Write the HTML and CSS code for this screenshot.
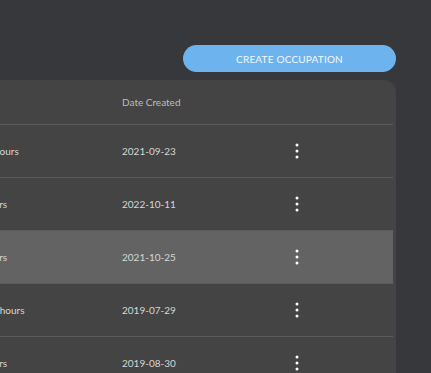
FILE: index.html
```html
<!DOCTYPE html>
<html lang="en">
<head>
    <meta charset="UTF-8">
    <meta name="viewport" content="width=device-width, initial-scale=1.0">
    <title>Occupations</title>
    <link rel="stylesheet" href="styles.css">
</head>
<body>

    <div class="page">
        <button class="btn">CREATE OCCUPATION</button>

        <!-- Table of occupations -->
        <div class="card">
            <div class="table">
                <div class="row head">
                    <div class="cell name">Title</div>
                    <div class="cell date">Date Created</div>
                    <div class="cell"></div>
                </div>
                <div class="row">
                    <div class="cell name">120 hours</div>
                    <div class="cell date">2021-09-23</div>
                    <div class="cell menu"><svg width="4" height="16" viewBox="0 0 4 16"><circle cx="2" cy="2" r="1.5"/><circle cx="2" cy="8" r="1.5"/><circle cx="2" cy="14" r="1.5"/></svg></div>
                </div>
                <div class="row">
                    <div class="cell name">8 hours</div>
                    <div class="cell date">2022-10-11</div>
                    <div class="cell menu"><svg width="4" height="16" viewBox="0 0 4 16"><circle cx="2" cy="2" r="1.5"/><circle cx="2" cy="8" r="1.5"/><circle cx="2" cy="14" r="1.5"/></svg></div>
                </div>
                <div class="row active">
                    <div class="cell name">8 hours</div>
                    <div class="cell date">2021-10-25</div>
                    <div class="cell menu"><svg width="4" height="16" viewBox="0 0 4 16"><circle cx="2" cy="2" r="1.5"/><circle cx="2" cy="8" r="1.5"/><circle cx="2" cy="14" r="1.5"/></svg></div>
                </div>
                <div class="row">
                    <div class="cell name">1200 hours</div>
                    <div class="cell date">2019-07-29</div>
                    <div class="cell menu"><svg width="4" height="16" viewBox="0 0 4 16"><circle cx="2" cy="2" r="1.5"/><circle cx="2" cy="8" r="1.5"/><circle cx="2" cy="14" r="1.5"/></svg></div>
                </div>
                <div class="row">
                    <div class="cell name">8 hours</div>
                    <div class="cell date">2019-08-30</div>
                    <div class="cell menu"><svg width="4" height="16" viewBox="0 0 4 16"><circle cx="2" cy="2" r="1.5"/><circle cx="2" cy="8" r="1.5"/><circle cx="2" cy="14" r="1.5"/></svg></div>
                </div>
            </div>
        </div>
    </div>

</body>
</html>
```

FILE: styles.css
```css
body {
    font-family: Lato, "Noto Sans", sans-serif;
    background-color: #37383c;
    margin: 0;
    overflow: hidden;
}

.page {
    display: flex;
    flex-direction: column;
    align-items: flex-end;
    padding: 45px 35px 0 0;
}

.btn {
    width: 213px;
    height: 27px;
    background-color: #6db4ef;
    color: #f4f8fc;
    border: none;
    border-radius: 14px;
    font-family: inherit;
    font-size: 10px;
    letter-spacing: 0.2px;
    margin-bottom: 8px;
    cursor: pointer;
}

.card {
    width: 613px;
    background-color: #444444;
    border-radius: 12px;
    padding-right: 3px;
    height: 320px;
}

.row {
    display: grid;
    grid-template-columns: 342px 166px 18px 1fr;
    align-items: center;
    height: 52px;
    border-top: 1px solid #5b5b5b;
    font-size: 10px;
    color: #d6d6d6;
}

.row.head {
    height: 44px;
    border-top: none;
    color: #bdbdbd;
}

.row.active {
    background-color: #636363;
}

.name {
    padding-left: 194px;
    white-space: nowrap;
}

.menu {
    display: flex;
    justify-content: center;
}

.menu svg {
    fill: #ffffff;
}
```
